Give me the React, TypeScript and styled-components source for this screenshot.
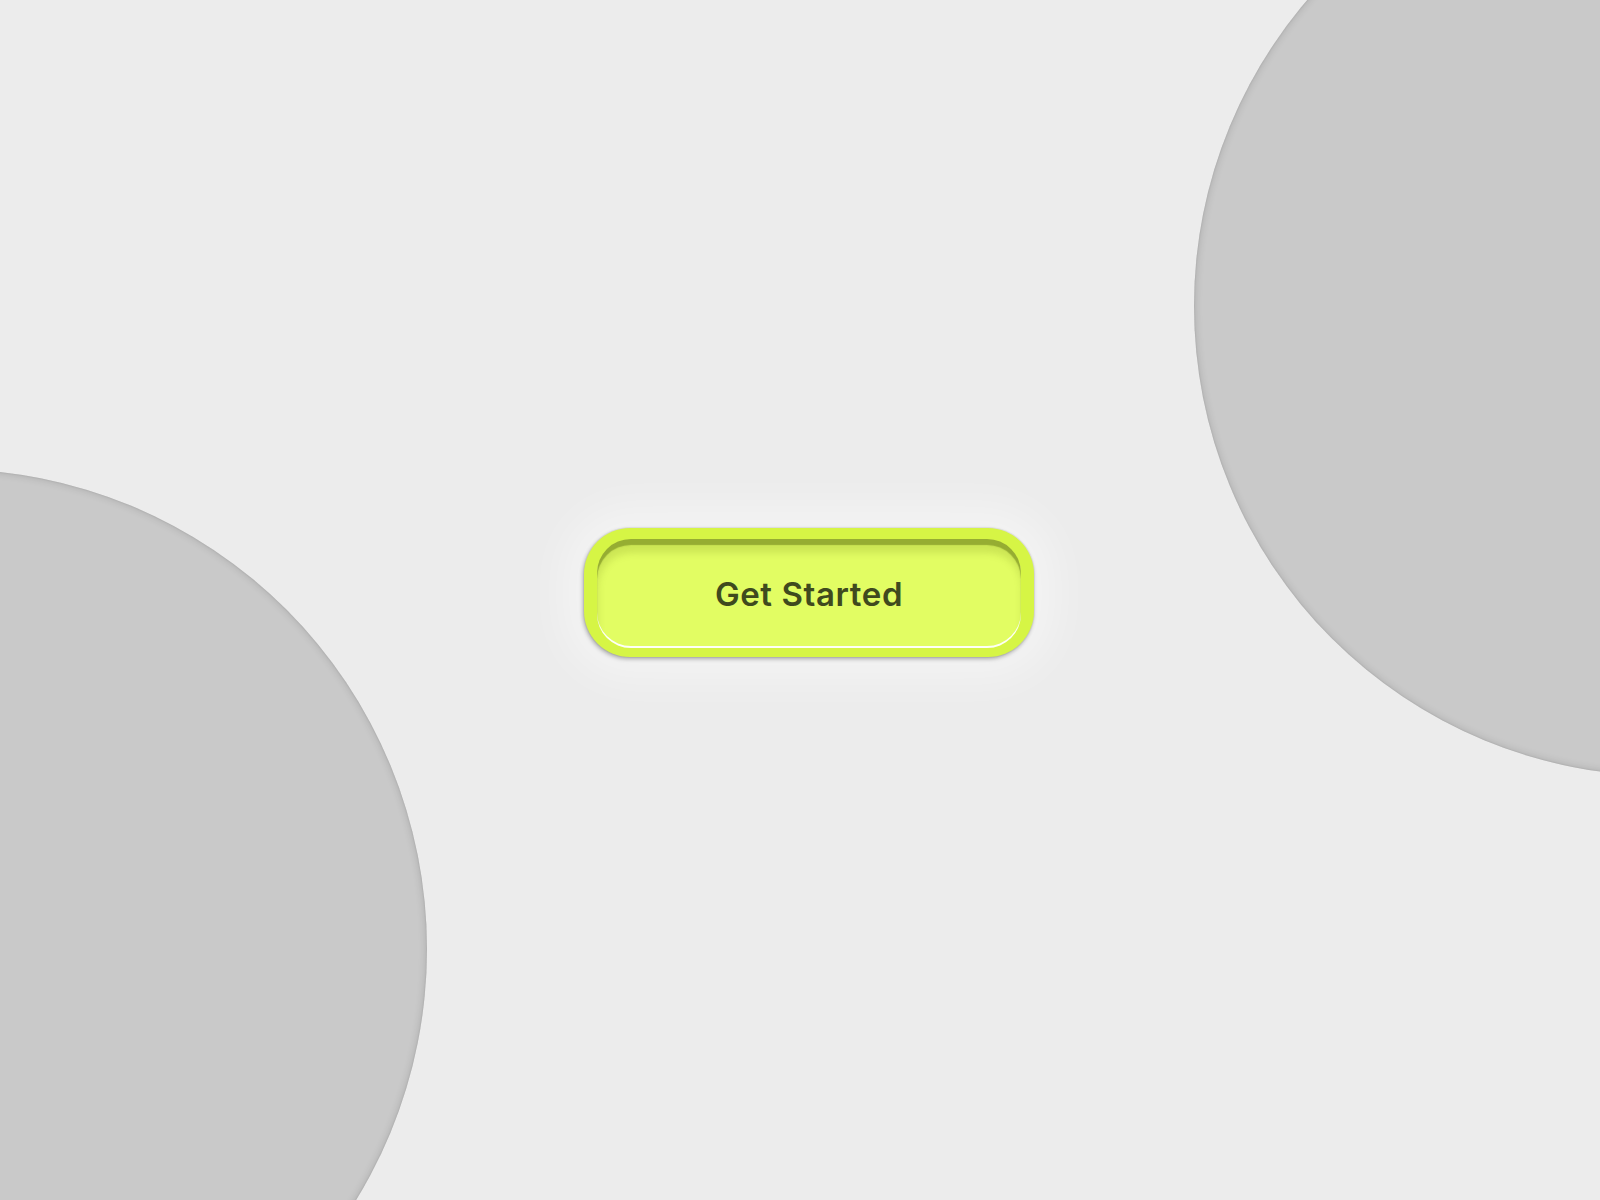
import React from "react";
import styled, { createGlobalStyle } from "styled-components";

const GlobalStyle = createGlobalStyle`
  html, body {
    margin: 0;
    padding: 0;
    background: #ececec;
  }
  * {
    box-sizing: border-box;
  }
`;

interface BlobProps {
  size: number;
  left: number;
  top: number;
}

const App = () => {
  return (
    <Page>
      <GlobalStyle />
      {/* background circles */}
      <Blob size={940} left={1194} top={-164} />
      <Blob size={960} left={-533} top={469} />

      {/* button */}
      <Halo>
        <StartButton type="button">
          <Face>Get Started</Face>
        </StartButton>
      </Halo>
    </Page>
  );
};

export default App;

const Page = styled.main`
  position: relative;
  width: 100%;
  height: 100vh;
  min-height: 1200px;
  overflow: hidden;
  background: #ececec;
  display: flex;
  justify-content: center;
  align-items: center;
  padding: 0 0 16px 18px;
`;

const Blob = styled.div<BlobProps>`
  position: absolute;
  left: ${(p) => p.left}px;
  top: ${(p) => p.top}px;
  width: ${(p) => p.size}px;
  height: ${(p) => p.size}px;
  border-radius: 50%;
  background: #c9c9c9;
  box-shadow:
    inset 0 0 2px rgba(0, 0, 0, 0.12),
    inset 0 0 9px rgba(0, 0, 0, 0.16);
`;

const Halo = styled.div`
  position: relative;
  z-index: 1;
  border-radius: 80px;
  padding: 36px;
`;

const StartButton = styled.button`
  display: flex;
  width: 450px;
  height: 129px;
  padding: 11px 13px 9px;
  border: none;
  border-radius: 46px;
  background: #d6f545;
  cursor: pointer;
  box-shadow:
    0 0 0 1px rgba(0, 0, 0, 0.05),
    -1px 2px 4px rgba(0, 0, 0, 0.3),
    0 0 40px 22px rgba(255, 255, 255, 0.4);
`;

const Face = styled.span`
  flex: 1;
  display: flex;
  align-items: center;
  justify-content: center;
  border-radius: 34px;
  background: #e2fd63;
  color: #3f4a1e;
  font-family: "Inter", "Noto Sans", sans-serif;
  font-size: 33px;
  font-weight: 600;
  letter-spacing: 0.6px;
  padding-top: 1px;
  box-shadow:
    inset 0 6px 1px rgba(95, 115, 15, 0.5),
    inset 1px 14px 7px rgba(120, 140, 30, 0.2),
    inset 0 -2px 0 rgba(255, 255, 255, 0.95);
`;
